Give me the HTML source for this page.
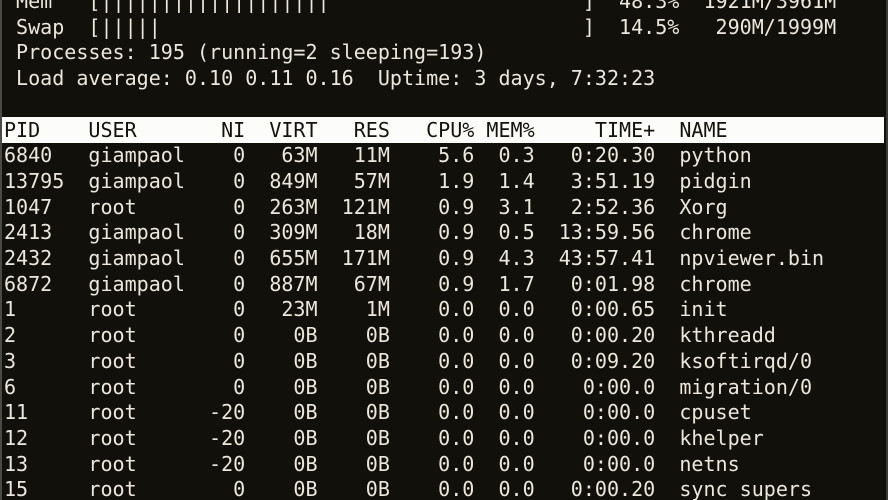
<!DOCTYPE html>
<html><head><meta charset="utf-8"><style>
html,body{margin:0;padding:0;background:#12100a;width:888px;height:500px;overflow:hidden;}
.wrap{position:relative;width:888px;height:500px;background:#12100a;}
.bl{position:absolute;left:0;top:0;width:2px;height:500px;background:#4a4a44;}
.br{position:absolute;right:0;top:0;width:2px;height:500px;background:#3a3a36;}
.hdr{position:absolute;left:2px;top:117px;width:882px;height:26px;background:#fcfcfa;}
pre{position:absolute;left:4px;top:-11px;margin:0;font-family:"DejaVu Sans Mono","Liberation Mono",monospace;font-size:20.04px;line-height:25.7px;color:#ebe7dc;white-space:pre;}
.h{color:#15120c;}
</style></head><body><div class="wrap">
<div class="bl"></div><div class="br"></div><div class="hdr"></div>
<pre> Mem   [|||||||||||||||||||                     ]  48.3%  1921M/3961M
 Swap  [|||||                                   ]  14.5%   290M/1999M
 Processes: 195 (running=2 sleeping=193)
 Load average: 0.10 0.11 0.16  Uptime: 3 days, 7:32:23

<span class="h">PID    USER       NI  VIRT   RES   CPU% MEM%     TIME+  NAME</span>
6840   giampaol    0   63M   11M    5.6  0.3   0:20.30  python
13795  giampaol    0  849M   57M    1.9  1.4   3:51.19  pidgin
1047   root        0  263M  121M    0.9  3.1   2:52.36  Xorg
2413   giampaol    0  309M   18M    0.9  0.5  13:59.56  chrome
2432   giampaol    0  655M  171M    0.9  4.3  43:57.41  npviewer.bin
6872   giampaol    0  887M   67M    0.9  1.7   0:01.98  chrome
1      root        0   23M    1M    0.0  0.0   0:00.65  init
2      root        0    0B    0B    0.0  0.0   0:00.20  kthreadd
3      root        0    0B    0B    0.0  0.0   0:09.20  ksoftirqd/0
6      root        0    0B    0B    0.0  0.0    0:00.0  migration/0
11     root      -20    0B    0B    0.0  0.0    0:00.0  cpuset
12     root      -20    0B    0B    0.0  0.0    0:00.0  khelper
13     root      -20    0B    0B    0.0  0.0    0:00.0  netns
15     root        0    0B    0B    0.0  0.0   0:00.20  sync_supers</pre>
</div></body></html>
